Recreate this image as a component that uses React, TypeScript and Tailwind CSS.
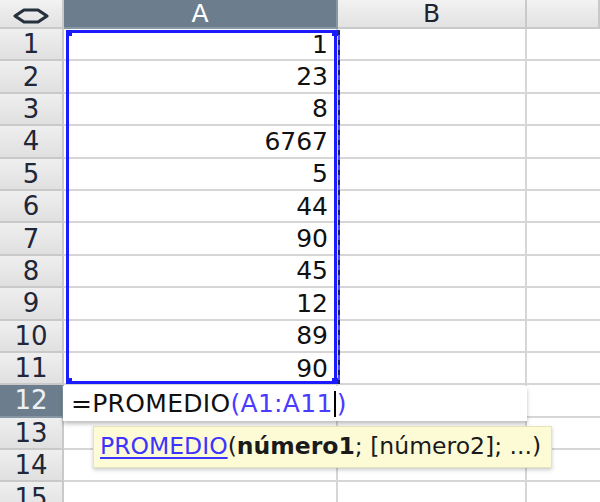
import React from 'react';

const values = ['1', '23', '8', '6767', '5', '44', '90', '45', '12', '89', '90', '', '', '', ''];

const font = { fontFamily: '"DejaVu Sans", Verdana, sans-serif' };

function HeaderCell({ children, active }: { children?: React.ReactNode; active?: boolean }) {
  return (
    <div
      className={`h-[29px] flex items-center justify-center border-b-2 border-r-2 text-[25px] leading-none ${
        active
          ? 'bg-[#6c7e8d] border-[#8797a4] text-white'
          : 'bg-gradient-to-b from-[#f2f2f2] to-[#e2e2e2] border-[#c9c9c9] text-[#1f2530]'
      }`}
    >
      {children}
    </div>
  );
}

export default function App() {
  return (
    <div className="relative w-[600px] h-[502px] overflow-hidden bg-white select-none" style={font}>
      <div className="grid grid-cols-[64px_274px_189px_1fr]">
        <HeaderCell>
          <svg width="38" height="18" viewBox="0 0 38 18" className="mt-[4px]">
            <path d="M3 9 L12 3 H26 L35 9 L26 15 H12 Z" fill="none" stroke="#27303f" strokeWidth="3.2" strokeLinejoin="round" />
          </svg>
        </HeaderCell>
        <HeaderCell active>A</HeaderCell>
        <HeaderCell>B</HeaderCell>
        <HeaderCell />

        {values.map((v, i) => (
          <React.Fragment key={i}>
            <div
              className={`h-[32.4px] flex items-center justify-center border-b-2 border-r-2 text-[26px] leading-none ${
                i === 11
                  ? 'bg-[#6c7e8d] border-[#8797a4] text-[#eef1f4]'
                  : 'bg-gradient-to-b from-[#efefef] to-[#e0e0e0] border-[#c9c9c9] text-[#1f2738]'
              }`}
            >
              {i + 1}
            </div>
            <div className="h-[32.4px] flex items-center justify-end pr-[8px] border-b-2 border-r-2 border-[#d6d6d6] text-[25px] leading-none text-[#111]">
              {v}
            </div>
            <div className="h-[32.4px] border-b-2 border-r-2 border-[#d6d6d6]" />
            <div className="h-[32.4px] border-b-2 border-[#d6d6d6]" />
          </React.Fragment>
        ))}
      </div>

      {/* selection range A1:A11 */}
      <div className="absolute left-[66px] top-[30px] w-[270px] h-[354px] border-l-[3px] border-t-[3px] border-b-[3px] border-[#1b1bff]">
        <div className="absolute -right-[1px] -top-[3px] bottom-0 w-[3px] bg-[#1b1bff]" />
        <div className="absolute -right-[4px] -top-[3px] -bottom-[3px] w-[2px] bg-[repeating-linear-gradient(to_bottom,#1b1b6e_0px,#1b1b6e_5px,#4a4aff_5px,#4a4aff_10px)]" />
        <div className="absolute -left-[3px] -top-[3px] w-[6px] h-[6px] bg-[#1b1bff]" />
        <div className="absolute -right-[2px] -top-[3px] w-[6px] h-[6px] bg-[#1b1bff]" />
        <div className="absolute -left-[3px] -bottom-[3px] w-[6px] h-[6px] bg-[#1b1bff]" />
        <div className="absolute -right-[2px] -bottom-[3px] w-[6px] h-[6px] bg-[#1b1bff]" />
      </div>

      {/* in-cell formula editor */}
      <div className="absolute left-[63px] top-[386px] w-[464px] h-[35px] bg-white shadow-[0_3px_4px_rgba(0,0,0,0.25)] flex items-center pl-[8px] text-[25px] leading-none tracking-[0.3px]">
        <span className="text-[#111]">=PROMEDIO</span>
        <span className="text-[#4b3bff]">(A1:A11</span>
        <span className="inline-block w-[2px] h-[26px] bg-black mx-[1px]" />
        <span className="text-[#4b3bff]">)</span>
      </div>

      {/* function tooltip */}
      <div className="absolute left-[93px] top-[426px] w-[459px] h-[42px] bg-[#fdfbd6] border border-[#e6e3b8] shadow-[0_2px_4px_rgba(0,0,0,0.2)] flex items-center pl-[6px] text-[23.5px] leading-none text-[#1a1a1a]">
        <span className="text-[#3d35ff] underline decoration-[2px] underline-offset-[3px]">PROMEDIO</span>
        <span>(</span>
        <span className="font-bold">número1</span>
        <span>; [número2]; ...)</span>
      </div>
    </div>
  );
}
